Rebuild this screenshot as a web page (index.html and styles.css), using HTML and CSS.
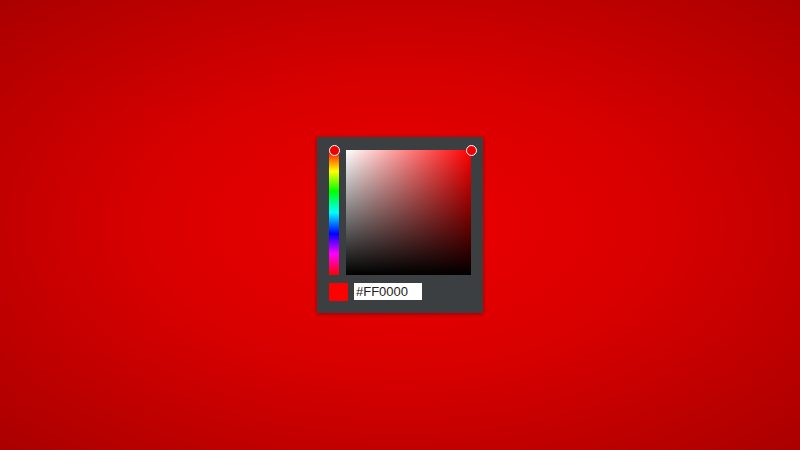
FILE: index.html
```html
<!DOCTYPE html>
<html>
<head>
<meta charset="utf-8">
<link rel="stylesheet" href="styles.css">
</head>
<body>
<div class="stage">
  <div class="picker">
    <div class="top">
      <div class="hue">
        <span class="handle hue-handle"></span>
      </div>
      <div class="sv">
        <span class="handle sv-handle"></span>
      </div>
    </div>
    <div class="bottom">
      <div class="swatch"></div>
      <div class="hex">#FF0000</div>
    </div>
  </div>
</div>
</body>
</html>
```
FILE: styles.css
```css
html, body {
  margin: 0;
  padding: 0;
  width: 800px;
  height: 450px;
  overflow: hidden;
}
.stage {
  width: 800px;
  height: 450px;
  display: flex;
  align-items: center;
  justify-content: center;
  background: radial-gradient(ellipse at center, #ee0000 0%, #d80000 45%, #aa0000 100%);
  font-family: "Liberation Sans", Arial, sans-serif;
}
.picker {
  width: 166px;
  height: 176px;
  box-sizing: border-box;
  padding: 13px 12px 12px 12px;
  background: #3c3f41;
  box-shadow: 0 1px 4px rgba(0, 0, 0, 0.35);
  display: flex;
  flex-direction: column;
  gap: 8px;
}
.top {
  display: flex;
  gap: 7px;
  height: 125px;
}
.hue {
  position: relative;
  width: 10px;
  height: 125px;
  background: linear-gradient(to bottom, #ff0000 0%, #ffff00 17%, #00ff00 33%, #00ffff 50%, #0000ff 67%, #ff00ff 83%, #ff0000 100%);
}
.sv {
  position: relative;
  width: 125px;
  height: 125px;
  background: linear-gradient(to top, #000 0%, rgba(0,0,0,0) 100%), linear-gradient(to right, #fff 0%, #ff0000 100%);
}
.handle {
  position: absolute;
  width: 11px;
  height: 11px;
  box-sizing: border-box;
  border-radius: 50%;
  border: 1.5px solid #fff;
  background: #ee0000;
}
.hue-handle {
  left: -0.5px;
  top: -5.5px;
}
.sv-handle {
  right: -5.5px;
  top: -5.5px;
}
.bottom {
  display: flex;
  align-items: flex-start;
  gap: 6px;
}
.swatch {
  width: 19px;
  height: 18px;
  background: #ff0000;
}
.hex {
  width: 68px;
  height: 17px;
  box-sizing: border-box;
  background: #fff;
  color: #222;
  font-size: 13px;
  line-height: 17px;
  padding-left: 2px;
}
```
